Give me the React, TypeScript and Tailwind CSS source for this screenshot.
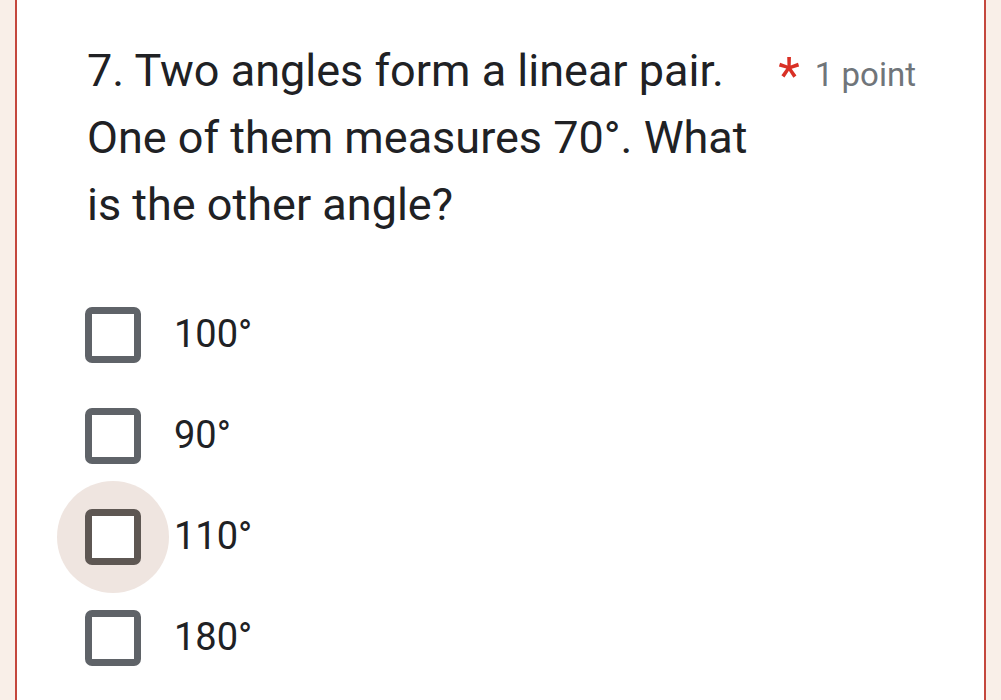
export default function App() {
  const options = ["100°", "90°", "110°", "180°"]

  return (
    <div className="w-[1001px] h-[700px] bg-[#f9efe8] px-[15px] overflow-hidden" style={{ fontFamily: "Roboto, 'Noto Sans', sans-serif" }}>
      <div className="h-full bg-white border-x-2 border-[#c4473d] pl-[70px] pr-[68px] pt-[37px]">
        <div className="flex items-baseline">
          <div className="w-[680px] text-[45px] leading-[67px] text-[#202124]">
            7. Two angles form a linear pair. One of them measures 70°. What is the other angle?
          </div>
          <span className="ml-auto relative top-[7px] text-[50px] leading-none text-[#d93025]">*</span>
          <span className="ml-[15px] text-[33px] text-[#70757a]">1 point</span>
        </div>

        <div className="mt-[46px] -ml-[2px] flex flex-col">
          {options.map((o, i) => (
            <div key={o} className="h-[101px] flex items-center">
              <div className="relative w-[56px] h-[56px] flex items-center justify-center">
                {i === 2 && <div className="absolute -inset-[28px] rounded-full bg-[#efe5e0]" />}
                <div className={"relative w-[56px] h-[56px] rounded-[7px] border-[7px] bg-white " + (i === 2 ? "border-[#5e5753]" : "border-[#5f6368]")} />
              </div>
              <span className="ml-[33px] text-[38px] text-[#202124]">{o}</span>
            </div>
          ))}
        </div>
      </div>
    </div>
  )
}
